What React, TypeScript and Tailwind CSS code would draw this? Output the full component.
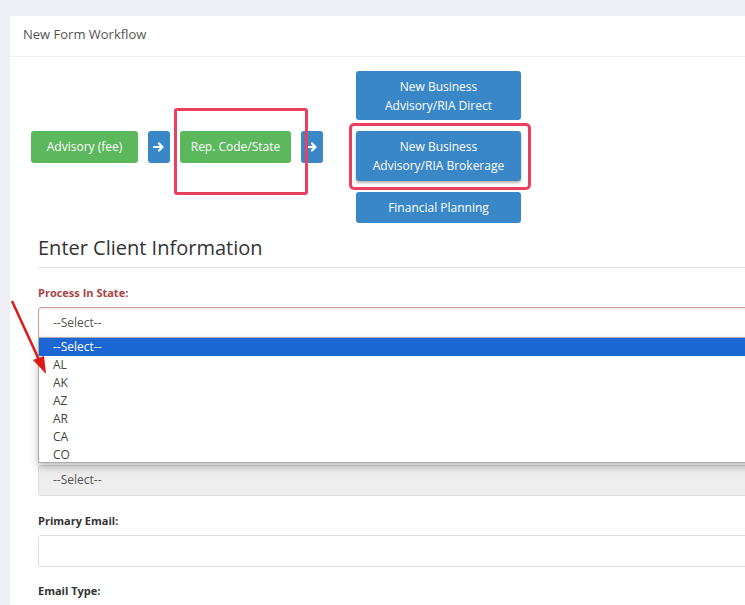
import React from "react";

const Arrow = () => (
  <div className="w-[22px] h-[32px] bg-[#3a87c8] rounded-[3px] flex items-center justify-center">
    <svg width="12" height="12" viewBox="0 0 12 12"><path d="M1 6h8M6 2.5L9.5 6 6 9.5" stroke="white" strokeWidth="2.2" fill="none" strokeLinecap="round" strokeLinejoin="round" /></svg>
  </div>
);

export default function App() {
  const f = { fontFamily: '"Open Sans", "Noto Sans", sans-serif' };
  return (
    <div className="w-[745px] h-[605px] bg-[#eef0f5] overflow-hidden relative" style={f}>
      <div className="absolute left-[10px] top-[16px] w-[760px] h-[620px] bg-white">
        <div className="h-[41px] border-b border-[#f0f0f0] pl-[13px] pt-[9px] text-[13px] text-[#555]">New Form Workflow</div>
        <div className="pl-[21px] pt-[14px] flex items-center gap-[10px] text-[12px] text-white">
          <div className="w-[107px] h-[32px] bg-[#5cb85c] rounded-[3px] flex items-center justify-center">Advisory (fee)</div>
          <Arrow />
          <div className="relative">
            <div className="w-[111px] h-[32px] bg-[#5cb85c] rounded-[3px] flex items-center justify-center">Rep. Code/State</div>
            <div className="absolute left-[-6px] top-[-23px] w-[134px] h-[87px] border-[3px] border-[#e8405e] rounded-[3px]" />
          </div>
          <Arrow />
          <div className="flex flex-col gap-[11px] ml-[23px]">
            <div className="w-[165px] h-[49px] bg-[#3a87c8] rounded-[3px] flex items-center justify-center text-center leading-[19px]">New Business<br />Advisory/RIA Direct</div>
            <div className="relative">
              <div className="w-[165px] h-[50px] bg-[#3a87c8] rounded-[3px] flex items-center justify-center text-center leading-[19px] shadow-[0_2px_3px_rgba(0,0,0,0.3)]">New Business<br />Advisory/RIA Brokerage</div>
              <div className="absolute left-[-7px] top-[-8px] w-[182px] h-[67px] border-[3px] border-[#e8405e] rounded-[5px]" />
            </div>
            <div className="w-[165px] h-[31px] bg-[#3a87c8] rounded-[3px] flex items-center justify-center">Financial Planning</div>
          </div>
        </div>
        <div className="pl-[28px] pt-[10px]">
          <div className="text-[20px] text-[#333] pb-[4px] border-b border-[#e5e5e5]">Enter Client Information</div>
          <div className="mt-[17px] text-[11px] font-bold text-[#a94442]">Process In State:</div>
          <div className="mt-[5px] h-[32px] border border-[#d59897] rounded-[3px] pl-[14px] flex items-center text-[12px] text-[#555] shadow-[inset_0_1px_1px_rgba(0,0,0,0.08)]">--Select--</div>
          <div className="mt-[126px] h-[31px] border border-[#ddd] rounded-[3px] pl-[14px] flex items-center text-[12px] text-[#555] bg-[#eeeeee]">--Select--</div>
          <div className="mt-[17px] text-[11px] font-bold text-[#333]">Primary Email:</div>
          <div className="mt-[6px] h-[32px] border border-[#ddd] rounded-[3px]" />
          <div className="mt-[16px] text-[11px] font-bold text-[#333]">Email Type:</div>
          <div className="mt-[6px] h-[32px] border border-[#ddd] rounded-[3px]" />
        </div>
      </div>
      <div className="absolute left-[38px] top-[337px] w-[720px] h-[126px] bg-white border border-[#aaa] shadow-[0_4px_8px_rgba(0,0,0,0.25)] text-[12px] text-[#444]">
        <div className="h-[18px] bg-[#1a66d2] text-white pl-[14px] leading-[18px]">--Select--</div>
        {["AL", "AK", "AZ", "AR", "CA", "CO"].map((s) => (
          <div key={s} className="h-[18px] pl-[14px] leading-[18px]">{s}</div>
        ))}
      </div>
      <svg className="absolute left-0 top-0" width="745" height="605">
        <line x1="12" y1="301" x2="40" y2="362" stroke="#e01818" strokeWidth="2.5" />
        <path d="M46 374 L33 360 L44 356 Z" fill="#e01818" />
      </svg>
    </div>
  );
}
